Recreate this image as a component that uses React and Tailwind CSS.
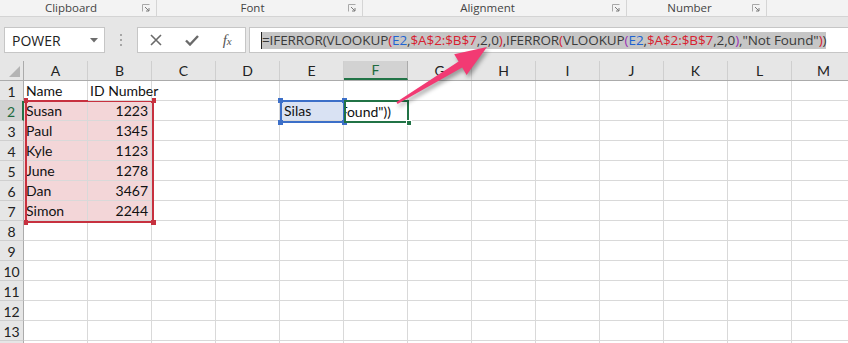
import React from "react";

const COLS = ["A", "B", "C", "D", "E", "F", "G", "H", "I", "J", "K", "L", "M"];
const DATA = {
  1: { A: "Name", B: "ID Number" },
  2: { A: "Susan", B: "1223", E: "Silas" },
  3: { A: "Paul", B: "1345" },
  4: { A: "Kyle", B: "1123" },
  5: { A: "June", B: "1278" },
  6: { A: "Dan", B: "3467" },
  7: { A: "Simon", B: "2244" },
};
const ROWS = Array.from({ length: 14 }, (_, i) => i + 1);

function Launcher() {
  return (
    <svg width="8" height="8" viewBox="0 0 8 8" className="shrink-0">
      <path d="M0.5 7.5V0.5H7.5" fill="none" stroke="#a8a8a8" strokeWidth="1" />
      <path d="M3 3L7 7M7 4V7H4" fill="none" stroke="#7a7a7a" strokeWidth="1" />
    </svg>
  );
}

function Group({ label, w, last }) {
  return (
    <div
      className={`flex items-center h-full pr-[6px] ${last ? "" : "border-r border-[#d5d5d5]"}`}
      style={{ width: w }}
    >
      <div className="flex-1 text-center text-[11.5px] leading-none text-[#444]">{label}</div>
      {label ? <Launcher /> : null}
    </div>
  );
}

const F = {
  g: "text-[#3a3a3a]",
  r: "text-[#d8202f]",
  b: "text-[#2163d1]",
  p: "text-[#9b30b5]",
};

const FORMULA = [
  ["=IFERROR(VLOOKUP", "g"],
  ["(", "r"],
  ["E2", "b"],
  [",", "g"],
  ["$A$2:$B$7", "r"],
  [",2,0", "g"],
  [")", "r"],
  [",IFERROR", "g"],
  ["(", "r"],
  ["VLOOKUP", "g"],
  ["(", "p"],
  ["E2", "b"],
  [",", "g"],
  ["$A$2:$B$7", "r"],
  [",2,0", "g"],
  [")", "p"],
  [',"Not Found"', "g"],
  [")", "r"],
  [")", "g"],
];

export default function App() {
  return (
    <div
      className="relative w-[848px] h-[343px] overflow-hidden bg-[#e6e6e6]"
      style={{ fontFamily: '"Open Sans", "Noto Sans", sans-serif' }}
    >
      {/* ribbon group labels */}
      <div className="flex h-[17px] bg-[#f3f3f3] border-b border-[#d4d4d4]">
        <Group label="Clipboard" w={157} />
        <Group label="Font" w={206} />
        <Group label="Alignment" w={264} />
        <Group label="Number" w={140} />
        <Group label="" w={81} last />
      </div>

      {/* formula bar */}
      <div className="flex items-start h-[44px] pt-[10px]">
        <div className="ml-[4px] w-[101px] h-[26px] shrink-0 bg-white border border-[#c6c6c6] flex items-center pl-[7px] pr-[6px]">
          <span className="flex-1 text-[14px] text-[#222]">POWER</span>
          <svg width="8" height="5" viewBox="0 0 8 5">
            <path d="M0 0H8L4 4.5Z" fill="#6d6d6d" />
          </svg>
        </div>
        <div className="w-[32px] h-[26px] shrink-0 flex flex-col items-center justify-center gap-[3px]">
          <span className="w-[2px] h-[2px] bg-[#a6a6a6]" />
          <span className="w-[2px] h-[2px] bg-[#a6a6a6]" />
          <span className="w-[2px] h-[2px] bg-[#a6a6a6]" />
        </div>
        <div className="w-[109px] h-[26px] shrink-0 bg-white border border-[#c6c6c6] flex items-center">
          <div className="w-[36px] flex justify-center">
            <svg width="12" height="12" viewBox="0 0 12 12">
              <path d="M1 1L11 11M11 1L1 11" stroke="#6a6a6a" strokeWidth="1.6" />
            </svg>
          </div>
          <div className="w-[36px] flex justify-center">
            <svg width="14" height="12" viewBox="0 0 14 12">
              <path d="M1 6.5L5 10.5L13 2" fill="none" stroke="#6a6a6a" strokeWidth="2.4" />
            </svg>
          </div>
          <div className="w-[36px] flex justify-center">
            <span
              className="italic text-[15px] text-[#555] leading-none"
              style={{ fontFamily: '"Liberation Serif", serif' }}
            >
              f<span className="text-[11px]">x</span>
            </span>
          </div>
        </div>
        <div className="ml-[3px] w-[620px] h-[26px] shrink-0 bg-white border border-[#c6c6c6] flex items-center pl-[11px]">
          <span className="w-[1px] h-[17px] bg-[#222]" />
          <span className="bg-[#c6c6c6] leading-[17px] text-[13.5px] whitespace-nowrap tracking-[-0.1px]">
            {FORMULA.map(([t, c], i) => (
              <span key={i} className={F[c]}>
                {t}
              </span>
            ))}
          </span>
        </div>
      </div>

      {/* grid */}
      <div className="relative bg-white" style={{ fontFamily: 'Lato, "Open Sans", sans-serif' }}>
        {/* header row */}
        <div className="flex h-[20px] bg-[#e6e6e6] border-b border-[#ababab]">
          <div className="w-[24px] shrink-0 border-r border-[#ababab] relative">
            <svg className="absolute right-[3px] bottom-[3px]" width="11" height="11" viewBox="0 0 11 11">
              <path d="M11 0V11H0Z" fill="#b4b4b4" />
            </svg>
          </div>
          {COLS.map((c) => (
            <div
              key={c}
              className={`w-[64px] shrink-0 flex items-center justify-center text-[14px] border-r ${
                c === "F"
                  ? "bg-[#d2d2d2] text-[#1e6b3f] border-[#ababab] border-b-2 border-b-[#217346]"
                  : "text-[#222] border-[#cfcfcf]"
              }`}
            >
              {c}
            </div>
          ))}
        </div>
        {ROWS.map((r) => (
          <div key={r} className="flex h-[20px]">
            <div
              className={`w-[24px] shrink-0 flex items-center justify-center pt-[1px] text-[14px] border-b border-[#cfcfcf] ${
                r === 2
                  ? "bg-[#d2d2d2] text-[#1e6b3f] border-r-2 border-r-[#217346]"
                  : "bg-[#e6e6e6] text-[#222] border-r border-r-[#ababab]"
              }`}
            >
              {r}
            </div>
            {COLS.map((c) => {
              const v = DATA[r] && DATA[r][c];
              const num = v && /^\d+$/.test(v);
              return (
                <div
                  key={c}
                  className={`w-[64px] shrink-0 border-r border-b border-[#d9d9d9] flex items-end text-[14px] leading-[18px] text-[#111] whitespace-nowrap ${
                    num ? "justify-end pr-[3px]" : "pl-[2px]"
                  } ${r >= 2 && r <= 7 && (c === "A" || c === "B") ? "bg-[#f3d6d8]" : ""} ${
                    r === 2 && c === "E" ? "bg-[#d9e2f3] pl-[4px]" : ""
                  } ${r === 1 && c === "B" ? "relative z-10" : ""}`}
                >
                  {v || ""}
                </div>
              );
            })}
          </div>
        ))}

        {/* overlays over cells */}
        <div className="absolute left-[24px] top-[20px] right-0 bottom-0 overflow-hidden pointer-events-none">
          {/* A2:B7 reference range */}
          <div className="absolute left-[1px] top-[19px] w-[129px] h-[123px] border-2 border-[#c7313f]">
            <span className="absolute -left-[4px] -top-[4px] w-[5px] h-[5px] bg-[#c7313f]" />
            <span className="absolute -right-[4px] -top-[4px] w-[5px] h-[5px] bg-[#c7313f]" />
            <span className="absolute -left-[4px] -bottom-[4px] w-[5px] h-[5px] bg-[#c7313f]" />
            <span className="absolute -right-[4px] -bottom-[4px] w-[5px] h-[5px] bg-[#c7313f]" />
          </div>
          {/* E2 reference */}
          <div className="absolute left-[256px] top-[19px] w-[65px] h-[23px] border-2 border-[#3c6fc8]">
            <span className="absolute -left-[4px] -top-[4px] w-[5px] h-[5px] bg-[#3c6fc8]" />
            <span className="absolute -right-[4px] -top-[4px] w-[5px] h-[5px] bg-[#3c6fc8]" />
            <span className="absolute -left-[4px] -bottom-[4px] w-[5px] h-[5px] bg-[#3c6fc8]" />
            <span className="absolute -right-[4px] -bottom-[4px] w-[5px] h-[5px] bg-[#3c6fc8]" />
          </div>
          {/* F2 active cell in edit mode */}
          <div className="absolute left-[320px] top-[19px] w-[65px] h-[23px] border-2 border-[#217346] bg-white overflow-hidden flex items-end justify-end pr-[16px]">
            <span className="whitespace-nowrap text-[14px] leading-[18px] text-[#111]">Found"))</span>
          </div>
          <span className="absolute left-[382px] top-[39px] w-[6px] h-[6px] bg-[#217346] border border-white" />
        </div>
      </div>

      {/* annotation arrow */}
      <svg className="absolute inset-0 pointer-events-none" width="848" height="343" viewBox="0 0 848 343">
        <defs>
          <filter id="sh" x="-20%" y="-20%" width="140%" height="140%">
            <feGaussianBlur stdDeviation="2" />
          </filter>
        </defs>
        <polygon
          points="396.5,102.1 458.6,61.6 454.2,54.3 487,47 466.6,74.9 462.2,67.6 397.5,103.9"
          fill="rgba(0,0,0,0.35)"
          transform="translate(2,3)"
          filter="url(#sh)"
        />
        <polygon
          points="396.5,102.1 458.6,61.6 454.2,54.3 487,47 466.6,74.9 462.2,67.6 397.5,103.9"
          fill="#f23a73"
        />
      </svg>
    </div>
  );
}
